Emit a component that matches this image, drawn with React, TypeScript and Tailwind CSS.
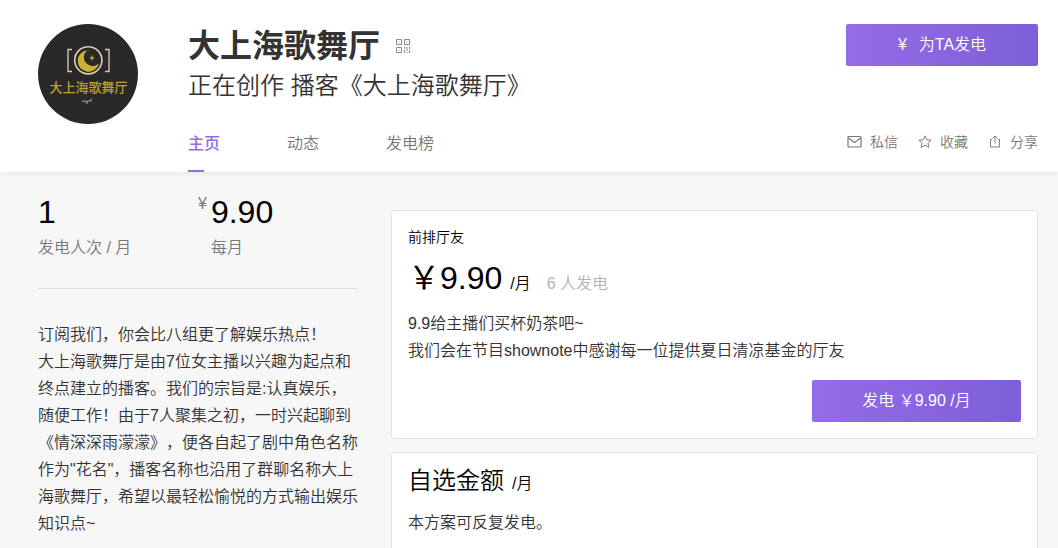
import React from "react";

function Avatar() {
  return (
    <svg viewBox="0 0 100 100" className="size-[100px] shrink-0" role="img" aria-label="大上海歌舞厅">
      <circle cx="50" cy="50" r="50" fill="#2a2828" />
      <g fill="none" stroke="#d8cfba" strokeWidth="1.3">
        <path d="M34 25.5H30V47.5H34" />
        <path d="M67 25.5H71V47.5H67" />
        <circle cx="50.3" cy="36.3" r="13.6" strokeWidth="1.6" />
      </g>
      <path
        d="M49.5 26.2A10.8 10.8 0 1 0 61 39.5A9 9 0 0 1 46.2 35.8A9 9 0 0 1 49.5 26.2Z"
        fill="#cdb02f"
      />
      <path d="M54 31l.8 2.200 2.200.8-2.200.8-.8 2.200-.8-2.200-2.200-.8 2.200-.8z" fill="#cdb02f" />
      <text x="50.5" y="68" textAnchor="middle" fontSize="13" fontWeight="500" fill="#bfa22e">
        大上海歌舞厅
      </text>
      <path
        d="M46 76.5c-1.5-.6-2 1.7-.6 1.5l1-1.3c-.2 1 .3 1.300 1 .9l.6-.9c0 1.200.9 1.200 1.500 0l-.5 2.600c-.5 1.200-1.500.6-.6-.2l2.200-1.800 1-1.200c-.4 1.300 0 1.500.6 1l1.300-2.300-.8 2.700"
        fill="none"
        stroke="#c9c2b4"
        strokeWidth="0.6"
      />
    </svg>
  );
}

function QrIcon() {
  return (
    <svg viewBox="0 0 15 15" className="size-[15px]" fill="none" stroke="#8a8a8a" aria-hidden="true">
      <path d="M.5.5h5v5h-5zM8.500.5h5v5h-5zM.5 8.500h5v5h-5z" />
      <path d="M2.500 3h1M10.500 3h1M2.500 11h1" />
      <path d="M8.500 8v2M8.500 11v3M11 8v4M11 13v1M13.500 8v2M13.500 11v3" />
    </svg>
  );
}

function MailIcon() {
  return (
    <svg viewBox="0 0 15 14" className="h-[14px] w-[15px]" fill="none" stroke="#777" strokeWidth="1.2" aria-hidden="true">
      <rect x="1" y="1.5" width="13" height="10.5" rx="1" />
      <path d="M1.500 3l6 4.500 6-4.500" />
    </svg>
  );
}

function StarIcon() {
  return (
    <svg viewBox="0 0 14 14" className="size-[14px]" fill="none" stroke="#808080" aria-hidden="true">
      <path d="M7 .8l1.800 4 4.400.4-3.300 2.900 1 4.300L7 10.100l-3.900 2.300 1-4.300L.8 5.200l4.400-.4z" strokeLinejoin="round" />
    </svg>
  );
}

function ShareIcon() {
  return (
    <svg viewBox="0 0 14 14" className="size-[14px]" fill="none" stroke="#808080" aria-hidden="true">
      <path d="M4 4.500H2.500v7.500h9V4.500H10M7 8.500V1M4.500 3.500L7 1l2.500 2.500" />
    </svg>
  );
}

const actions = [
  { label: "私信", icon: <MailIcon /> },
  { label: "收藏", icon: <StarIcon /> },
  { label: "分享", icon: <ShareIcon /> },
];

export default function App() {
  return (
    <div className="min-h-screen bg-[#f7f7f7] font-['Liberation_Sans','Noto_Sans_CJK_SC',sans-serif] text-base font-[350] text-[#333] [text-spacing-trim:space-all]">
      <header className="flex bg-white pr-5 pl-[38px] pt-6 shadow-[0_1px_6px_rgba(0,0,0,0.08)]">
        <Avatar />
        <div className="ml-[50px] flex flex-1 flex-col">
          <div className="flex items-center gap-4">
            <h1 className="text-[32px] leading-[44px] font-bold">大上海歌舞厅</h1>
            <button type="button" aria-label="二维码">
              <QrIcon />
            </button>
          </div>
          <p className="text-2xl leading-9">正在创作 播客《大上海歌舞厅》</p>
          <nav className="mt-7 flex gap-[67px] leading-6 text-[#777]">
            <a href="#home" className="flex flex-col font-medium text-[#946ce6]">
              主页
              <span className="mt-[14px] h-[2px] w-4 bg-[#946ce6]" />
            </a>
            <a href="#feed">动态</a>
            <a href="#rank">发电榜</a>
          </nav>
        </div>
        <div className="flex flex-col items-end justify-between">
          <button
            type="button"
            className="flex h-[42px] w-48 items-center justify-center gap-3 rounded-[2px] bg-linear-to-r from-[#946ce6] to-[#7e5fd9] text-white"
          >
            <span>¥</span>
            <span>为TA发电</span>
          </button>
          <div className="mb-5 flex gap-5 text-sm text-[#777]">
            {actions.map((a) => (
              <button key={a.label} type="button" className="flex items-center gap-2">
                {a.icon}
                {a.label}
              </button>
            ))}
          </div>
        </div>
      </header>

      <main className="flex gap-[33px] pr-5 pl-[38px]">
        <aside className="w-80 shrink-0 pt-5">
          <dl className="flex border-b border-[#ddd] pb-7">
            <div className="flex w-40 flex-col-reverse">
              <dt className="mt-1 leading-6 text-[#777]">发电人次 / 月</dt>
              <dd className="text-[32px] leading-10 text-black">1</dd>
            </div>
            <div className="flex">
              <span className="mr-1 leading-6 text-[#777]">¥</span>
              <div className="flex flex-col-reverse">
                <dt className="mt-1 leading-6 text-[#777]">每月</dt>
                <dd className="text-[32px] leading-10 text-black">9.90</dd>
              </div>
            </div>
          </dl>
          <p className="pt-8 leading-[27px]">
            订阅我们，你会比八组更了解娱乐热点！
            <br />
            大上海歌舞厅是由7位女主播以兴趣为起点和终点建立的播客。我们的宗旨是:认真娱乐，随便工作！由于7人聚集之初，一时兴起聊到《情深深雨濛濛》，便各自起了剧中角色名称作为"花名"，播客名称也沿用了群聊名称大上海歌舞厅，希望以最轻松愉悦的方式输出娱乐知识点~
          </p>
        </aside>

        <div className="flex flex-1 flex-col gap-[13px] pt-[38px]">
          <section className="flex flex-col rounded-[3px] border border-[#e2e2e2] bg-white p-4">
            <h2 className="text-sm leading-5 text-black">前排厅友</h2>
            <div className="mt-2 flex items-baseline text-black">
              <span className="text-[32px] leading-[46px] font-normal">￥9.90</span>
              <span className="ml-2">/月</span>
              <span className="ml-4 text-[#b3b3b3]">6 人发电</span>
            </div>
            <p className="mt-[9px] leading-[27px]">
              9.9给主播们买杯奶茶吧~
              <br />
              我们会在节目shownote中感谢每一位提供夏日清凉基金的厅友
            </p>
            <button
              type="button"
              className="mt-4 h-[42px] w-[209px] self-end rounded-[2px] bg-linear-to-r from-[#946ce6] to-[#7e5fd9] text-white"
            >
              发电 ￥9.90 /月
            </button>
          </section>
          <section className="rounded-[3px] border border-[#e2e2e2] bg-white px-4 pt-2 pb-10">
            <h2 className="flex items-baseline gap-2 text-2xl leading-10 text-black">
              自选金额 <span className="text-base">/月</span>
            </h2>
            <p className="mt-2 leading-[27px]">本方案可反复发电。</p>
          </section>
        </div>
      </main>
    </div>
  );
}
